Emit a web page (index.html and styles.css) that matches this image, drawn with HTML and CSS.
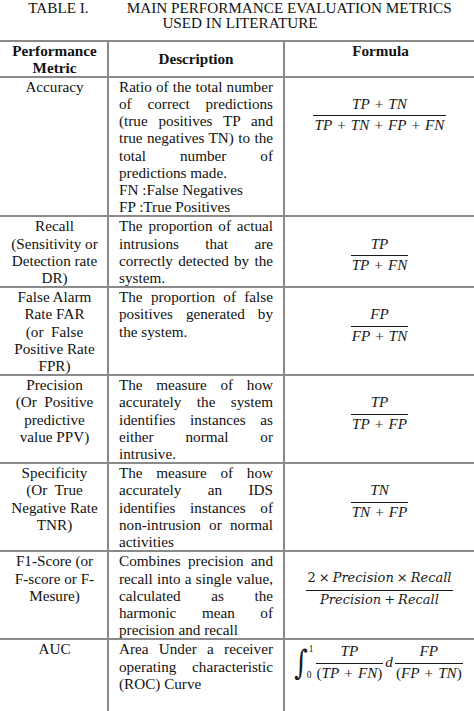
FILE: index.html
```html
<!DOCTYPE html>
<html>
<head>
<meta charset="utf-8">
<title>Main performance evaluation metrics</title>
<link rel="stylesheet" href="styles.css">
</head>
<body>
<div class="caption">
  <div class="cap-line"><span class="cap-num">TABLE I.</span>MAIN PERFORMANCE EVALUATION METRICS</div>
  <div class="cap-line">USED IN LITERATURE</div>
</div>

<div class="tbl">
  <div class="cell c1 head">Performance<br>Metric</div>
  <div class="cell c2 head head-mid">Description</div>
  <div class="cell c3 head">Formula</div>

  <!-- Accuracy -->
  <div class="cell c1">Accuracy</div>
  <div class="cell c2">
    <div class="j">Ratio of the total number</div>
    <div class="j">of correct predictions</div>
    <div class="j">(true positives TP and</div>
    <div class="j">true negatives TN) to the</div>
    <div class="j">total number of</div>
    <div>predictions made.</div>
    <div>FN :False Negatives</div>
    <div>FP :True Positives</div>
  </div>
  <div class="cell c3 formula">
    <span class="frac">
      <span class="num"><i>TP</i><span class="op">+</span><i>TN</i></span>
      <span class="bar"></span>
      <span class="den"><i>TP</i><span class="op">+</span><i>TN</i><span class="op">+</span><i>FP</i><span class="op">+</span><i>FN</i></span>
    </span>
  </div>

  <!-- Recall -->
  <div class="cell c1">Recall<br>(Sensitivity or<br>Detection rate<br>DR)</div>
  <div class="cell c2">
    <div class="j">The proportion of actual</div>
    <div class="j">intrusions that are</div>
    <div class="j">correctly detected by the</div>
    <div>system.</div>
  </div>
  <div class="cell c3 formula">
    <span class="frac">
      <span class="num"><i>TP</i></span>
      <span class="bar"></span>
      <span class="den"><i>TP</i><span class="op">+</span><i>FN</i></span>
    </span>
  </div>

  <!-- FAR -->
  <div class="cell c1">False Alarm<br>Rate FAR<br>(or&nbsp; False<br>Positive Rate<br>FPR)</div>
  <div class="cell c2">
    <div class="j">The proportion of false</div>
    <div class="j">positives generated by</div>
    <div>the system.</div>
  </div>
  <div class="cell c3 formula">
    <span class="frac">
      <span class="num"><i>FP</i></span>
      <span class="bar"></span>
      <span class="den"><i>FP</i><span class="op">+</span><i>TN</i></span>
    </span>
  </div>

  <!-- Precision -->
  <div class="cell c1">Precision<br>(Or&nbsp; Positive<br>predictive<br>value PPV)</div>
  <div class="cell c2">
    <div class="j">The measure of how</div>
    <div class="j">accurately the system</div>
    <div class="j">identifies instances as</div>
    <div class="j">either normal or</div>
    <div>intrusive.</div>
  </div>
  <div class="cell c3 formula">
    <span class="frac">
      <span class="num"><i>TP</i></span>
      <span class="bar"></span>
      <span class="den"><i>TP</i><span class="op">+</span><i>FP</i></span>
    </span>
  </div>

  <!-- Specificity -->
  <div class="cell c1">Specificity<br>(Or&nbsp; True<br>Negative Rate<br>TNR)</div>
  <div class="cell c2">
    <div class="j">The measure of how</div>
    <div class="j">accurately an IDS</div>
    <div class="j">identifies instances of</div>
    <div class="j">non-intrusion or normal</div>
    <div>activities</div>
  </div>
  <div class="cell c3 formula">
    <span class="frac">
      <span class="num"><i>TN</i></span>
      <span class="bar"></span>
      <span class="den"><i>TN</i><span class="op">+</span><i>FP</i></span>
    </span>
  </div>

  <!-- F1 -->
  <div class="cell c1">F1-Score (or<br>F-score or F-<br>Mesure)</div>
  <div class="cell c2">
    <div class="j">Combines precision and</div>
    <div class="j">recall into a single value,</div>
    <div class="j">calculated as the</div>
    <div class="j">harmonic mean of</div>
    <div>precision and recall</div>
  </div>
  <div class="cell c3 formula">
    <span class="frac f1">
      <span class="num"><span class="up">2</span><span class="op">×</span><i>Precision</i><span class="op">×</span><i>Recall</i></span>
      <span class="bar"></span>
      <span class="den"><i>Precision</i><span class="op">+</span><i>Recall</i></span>
    </span>
  </div>

  <!-- AUC -->
  <div class="cell c1 last">AUC</div>
  <div class="cell c2 last">
    <div class="j">Area Under a receiver</div>
    <div class="j">operating characteristic</div>
    <div>(ROC) Curve</div>
  </div>
  <div class="cell c3 last formula auc">
    <span class="integral">
      <span class="int-sign">∫</span>
      <span class="limits"><span class="lim-up">1</span><span class="lim-lo">0</span></span>
    </span>
    <span class="frac">
      <span class="num"><i>TP</i></span>
      <span class="bar"></span>
      <span class="den">(<i>TP</i><span class="op">+</span><i>FN</i>)</span>
    </span>
    <i class="dvar">d</i>
    <span class="frac">
      <span class="num"><i>FP</i></span>
      <span class="bar"></span>
      <span class="den">(<i>FP</i><span class="op">+</span><i>TN</i>)</span>
    </span>
  </div>
</div>
</body>
</html>
```

FILE: styles.css
```css
* {
  box-sizing: border-box;
}

html, body {
  margin: 0;
  padding: 0;
  background: #ffffff;
}

body {
  height: 711px;
  overflow: hidden;
  display: flex;
  flex-direction: column;
  font-family: "Liberation Serif", "Times New Roman", serif;
  font-size: 15.2px;
  color: #111;
}

/* caption */
.caption {
  text-align: center;
  line-height: 15.4px;
  padding-left: 6px;
}

.cap-num {
  display: inline-block;
  margin-right: 38px;
}

/* table */
.tbl {
  flex: 1;
  margin-top: 9px;
  display: grid;
  grid-template-columns: 109px 176px 1fr;
  grid-template-rows: auto auto auto auto auto auto auto 1fr;
  border-top: 2px solid #8a8a8a;
  line-height: 17.2px;
}

.cell {
  border-bottom: 2px solid #8a8a8a;
}

.cell.last {
  border-bottom: none;
}

.c1,
.c2 {
  border-right: 2px solid #8a8a8a;
}

.c1 {
  text-align: center;
  padding: 0 0 0 2px;
}

.c2 {
  padding: 0 10px;
  text-align: left;
}

.j {
  text-align: justify;
  text-align-last: justify;
}

.head {
  font-weight: bold;
  line-height: 17px;
  text-align: center;
}

.head-mid {
  display: flex;
  align-items: center;
  justify-content: center;
}

.c3.head {
  padding-left: 2px;
}

/* formulas */
.formula {
  display: flex;
  justify-content: center;
  align-items: flex-start;
  padding-top: 17.2px;
  color: #1a1a1a;
}

.frac {
  display: inline-flex;
  flex-direction: column;
  align-items: center;
}

.num,
.den {
  display: block;
  white-space: nowrap;
  line-height: 17.2px;
  padding: 0 1px;
}

.bar {
  display: block;
  align-self: stretch;
  height: 1px;
  margin-top: 3px;
  background: #1a1a1a;
}

.frac i {
  font-style: italic;
}

.op {
  display: inline-block;
  margin: 0 5px;
  font-style: normal;
}

.f1 {
  font-family: "DejaVu Serif", "Liberation Serif", serif;
  font-size: 13px;
}

.f1 .op {
  margin: 0 3px;
}

.up {
  font-style: normal;
}

/* AUC integral */
.auc {
  padding-top: 2px;
  align-items: center;
  align-self: start;
  padding-right: 2px;
}

.integral {
  display: inline-flex;
  align-items: stretch;
  height: 36px;
  margin-right: 2px;
}

.int-sign {
  font-family: "DejaVu Serif", serif;
  font-style: italic;
  font-size: 26px;
  line-height: 36px;
  display: inline-block;
  transform: scaleY(1.3);
}

.limits {
  display: inline-flex;
  flex-direction: column;
  justify-content: space-between;
  font-size: 9.5px;
  line-height: 10px;
  margin-left: -1px;
}

.lim-up {
  padding-left: 2px;
}

.dvar {
  font-style: italic;
  margin: 0 2px;
}
```
